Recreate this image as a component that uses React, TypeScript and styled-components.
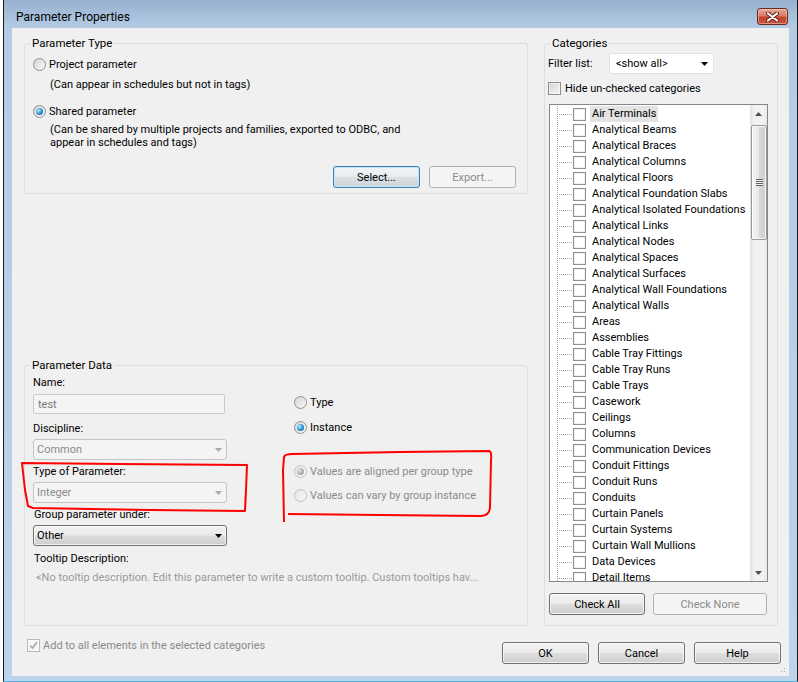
import styled, { createGlobalStyle, css } from 'styled-components';

const GlobalStyle = createGlobalStyle`
  * { box-sizing: border-box; }
  html, body { margin: 0; padding: 0; background: #ffffff; }
  body {
    font-family: Roboto, "Liberation Sans", Arial, sans-serif;
    font-size: 11px;
    color: #000;
  }
`;

const categories = [
  'Air Terminals',
  'Analytical Beams',
  'Analytical Braces',
  'Analytical Columns',
  'Analytical Floors',
  'Analytical Foundation Slabs',
  'Analytical Isolated Foundations',
  'Analytical Links',
  'Analytical Nodes',
  'Analytical Spaces',
  'Analytical Surfaces',
  'Analytical Wall Foundations',
  'Analytical Walls',
  'Areas',
  'Assemblies',
  'Cable Tray Fittings',
  'Cable Tray Runs',
  'Cable Trays',
  'Casework',
  'Ceilings',
  'Columns',
  'Communication Devices',
  'Conduit Fittings',
  'Conduit Runs',
  'Conduits',
  'Curtain Panels',
  'Curtain Systems',
  'Curtain Wall Mullions',
  'Data Devices',
  'Detail Items',
];

/* ---------- window chrome ---------- */

const Screen = styled.div`
  position: relative;
  width: 798px;
  height: 682px;
  padding-left: 3px;
  display: flex;
  background: #fff;
`;

const Window = styled.div`
  flex: 1;
  display: flex;
  flex-direction: column;
  border-left: 1px solid #1b1b1b;
  border-right: 1px solid #1b1b1b;
  border-bottom: 1px solid #4fb6e2;
  background: linear-gradient(180deg, #97b2cf 0px, #b4cbe5 28px, #bdd3eb 100%);
`;

const TitleBar = styled.div`
  height: 28px;
  flex: none;
  display: flex;
  align-items: flex-start;
  justify-content: space-between;
  padding: 0 9px 0 12px;
`;

const Title = styled.div`
  margin-top: 9px;
  font-size: 12px;
  line-height: 16px;
`;

const CloseButton = styled.div`
  margin-top: 8px;
  width: 31px;
  height: 17px;
  border: 1px solid #6b2a22;
  border-radius: 3px;
  background: linear-gradient(180deg, #e9a99a 0%, #d67a66 45%, #c5442c 55%, #c9563f 100%);
  box-shadow: inset 0 0 0 1px rgba(255, 220, 210, 0.45);
  display: flex;
  align-items: center;
  justify-content: center;
`;

const Client = styled.div`
  position: relative;
  flex: 1;
  margin: 0 8px 5px 8px;
  padding: 8px 11px 0 12px;
  background: #f0f0f0;
  display: flex;
  flex-direction: column;
`;

const Grip = styled.div`
  position: absolute;
  right: 2px;
  bottom: 2px;
  width: 10px;
  height: 10px;
  background-image: radial-gradient(circle, #a8a8a8 0.8px, transparent 1px);
  background-size: 3px 3px;
  clip-path: polygon(100% 0, 100% 100%, 0 100%);
`;

/* ---------- layout ---------- */

const MainRow = styled.div`
  display: flex;
  gap: 16px;
`;

const LeftColumn = styled.div`
  width: 504px;
  display: flex;
  flex-direction: column;
`;

const Group = styled.fieldset<{ $height: number; $width?: number; $top?: number }>`
  margin: ${p => p.$top ?? 0}px 0 0 0;
  padding: 0;
  min-width: 0;
  width: ${p => (p.$width ? `${p.$width}px` : 'auto')};
  height: ${p => p.$height}px;
  border: 1px solid #d5dfe5;
  border-radius: 3px;
`;

const Legend = styled.legend`
  margin-left: 5px;
  padding: 0 2px;
  font-size: 11.5px;
  line-height: 14px;
`;

const GroupBody = styled.div<{ $pad: string }>`
  padding: ${p => p.$pad};
  display: flex;
  flex-direction: column;
`;

const Row = styled.div<{ $top?: number; $indent?: number }>`
  display: flex;
  align-items: center;
  height: 16px;
  margin-top: ${p => p.$top ?? 0}px;
  margin-left: ${p => p.$indent ?? 0}px;
  gap: 3px;
  white-space: nowrap;
`;

const Note = styled.div<{ $top: number; $lh?: number }>`
  margin: ${p => p.$top}px 0 0 17px;
  line-height: ${p => p.$lh ?? 16}px;
`;

const Label = styled.div<{ $top: number; $indent?: number; $muted?: boolean }>`
  margin: ${p => p.$top}px 0 0 ${p => p.$indent ?? 0}px;
  line-height: 16px;
  white-space: nowrap;
  color: ${p => (p.$muted ? '#9a9a9a' : '#000')};
`;

const Text = styled.span<{ $disabled?: boolean }>`
  color: ${p => (p.$disabled ? '#8b8b8b' : '#000')};
`;

const ButtonRow = styled.div<{ $top: number; $gap: number; $justify?: string; $indent?: number; $right?: number }>`
  display: flex;
  justify-content: ${p => p.$justify ?? 'flex-start'};
  gap: ${p => p.$gap}px;
  margin: ${p => p.$top}px ${p => p.$right ?? 0}px 0 ${p => p.$indent ?? 0}px;
`;

const DataGrid = styled.div`
  display: grid;
  grid-template-columns: 194px 1fr;
  column-gap: 67px;
`;

const Stack = styled.div`
  display: flex;
  flex-direction: column;
`;

const Footer = styled.div`
  display: flex;
  justify-content: space-between;
  align-items: flex-start;
`;

/* ---------- controls ---------- */

const Button = styled.button<{ $width: number; $focused?: boolean }>`
  width: ${p => p.$width}px;
  height: 22px;
  padding: 0;
  font: inherit;
  color: #000;
  border: 1px solid #707070;
  border-radius: 3px;
  background: linear-gradient(180deg, #f2f2f2 0%, #ebebeb 48%, #dddddd 52%, #cfcfcf 100%);
  box-shadow: inset 0 0 0 1px rgba(255, 255, 255, 0.7);

  &:disabled {
    color: #8a8a8a;
    border-color: #adb2b5;
    background: #f4f4f4;
    box-shadow: none;
  }

  ${p =>
    p.$focused &&
    css`
      border-color: #3c7fb1;
      box-shadow: inset 0 0 0 1px #c5e4f7;
      background: linear-gradient(180deg, #f1f5f8 0%, #e6ecf0 48%, #d9dfe3 52%, #cfd5d9 100%);
    `}
`;

const RadioMark = styled.span<{ $checked?: boolean; $disabled?: boolean }>`
  flex: none;
  width: 13px;
  height: 13px;
  border-radius: 50%;
  border: 1px solid ${p => (p.$disabled ? '#c2c2c2' : '#8e8f8f')};
  background: ${p =>
    p.$disabled
      ? 'linear-gradient(135deg, #e6e6e6, #f7f7f7)'
      : 'linear-gradient(135deg, #d4d4d4, #f9f9f9)'};
  display: flex;
  align-items: center;
  justify-content: center;

  &::after {
    content: '';
    display: ${p => (p.$checked ? 'block' : 'none')};
    width: 7px;
    height: 7px;
    border-radius: 50%;
    background: ${p =>
      p.$disabled
        ? 'radial-gradient(circle at 35% 35%, #e4e4e4, #a2a2a2 70%, #8d8d8d)'
        : 'radial-gradient(circle at 35% 35%, #b5ecff, #2b8fd6 55%, #0c4c86)'};
  }
`;

const CheckMark = styled.span<{ $disabled?: boolean; $soft?: boolean }>`
  flex: none;
  width: 13px;
  height: 13px;
  border: 1px solid ${p => (p.$disabled ? '#b9b9b9' : '#8e8f8f')};
  background: ${p =>
    p.$soft
      ? '#fff'
      : p.$disabled
      ? '#f4f4f4'
      : 'linear-gradient(135deg, #d3d3d3, #f8f8f8)'};
  box-shadow: inset 0 0 0 1px ${p => (p.$soft ? '#f0f0f0' : 'rgba(255,255,255,0.5)')};
  display: flex;
  align-items: center;
  justify-content: center;
`;

const Combo = styled.div<{ $variant: 'white' | 'disabled' | 'button'; $width: number; $top?: number }>`
  width: ${p => p.$width}px;
  height: 21px;
  margin-top: ${p => p.$top ?? 0}px;
  display: flex;
  align-items: center;
  justify-content: space-between;
  border-radius: 3px;
  white-space: nowrap;

  ${p =>
    p.$variant === 'white' &&
    css`
      padding: 0 5px 0 6px;
      background: #fff;
      border: 1px solid #e2e3ea;
      border-radius: 2px;
    `}
  ${p =>
    p.$variant === 'disabled' &&
    css`
      padding: 0 4px 0 3px;
      color: #8b8b8b;
      background: #f4f4f4;
      border: 1px solid #c3c6c8;
    `}
  ${p =>
    p.$variant === 'button' &&
    css`
      padding: 0 4px 0 3px;
      border: 1px solid #707070;
      background: linear-gradient(180deg, #f2f2f2 0%, #ebebeb 48%, #dddddd 52%, #cfcfcf 100%);
      box-shadow: inset 0 0 0 1px rgba(255, 255, 255, 0.7);
    `}
`;

const TextBox = styled.div`
  width: 192px;
  height: 20px;
  margin-top: 3px;
  padding: 0 4px;
  display: flex;
  align-items: center;
  color: #7a7a7a;
  background: #f4f4f4;
  border: 1px solid #c9c9c9;
  border-radius: 2px;
`;

/* ---------- category tree ---------- */

const FilterLabel = styled.div`
  width: 61px;
  margin-left: 3px;
`;

const FilterRow = styled.div`
  display: flex;
  align-items: center;
  margin-top: 3px;
`;

const TreeBox = styled.div`
  margin: 8px 0 0 4px;
  width: 219px;
  height: 478px;
  border: 1px solid #828790;
  background: #fff;
  display: flex;
  overflow: hidden;
`;

const TreeItems = styled.div`
  flex: 1;
  padding-top: 1px;
  overflow: hidden;
`;

const TreeRow = styled.div`
  height: 16px;
  padding-left: 7px;
  display: flex;
  align-items: center;
  white-space: nowrap;
`;

const Connector = styled.span`
  flex: none;
  width: 16px;
  height: 16px;
  background:
    repeating-linear-gradient(to bottom, #a0a0a0 0 1px, transparent 1px 2px) 0 0 / 1px 100% no-repeat,
    repeating-linear-gradient(to right, #a0a0a0 0 1px, transparent 1px 2px) 0 8px / 100% 1px no-repeat;
`;

const ItemText = styled.span<{ $selected?: boolean }>`
  margin-left: 4px;
  padding: 0 2px;
  line-height: 16px;
  background: ${p => (p.$selected ? '#e3e3e3' : 'transparent')};
`;

const ScrollBar = styled.div`
  flex: none;
  width: 17px;
  display: flex;
  flex-direction: column;
  background: linear-gradient(90deg, #e2e2e2 0%, #f1f1f1 25%, #f3f3f3 75%, #e8e8e8 100%);
`;

const ScrollArrow = styled.div`
  height: 17px;
  flex: none;
  display: flex;
  align-items: center;
  justify-content: center;
`;

const ScrollTrack = styled.div`
  flex: 1;
  padding: 3px 0 0 1px;
`;

const Thumb = styled.div`
  height: 115px;
  border: 1px solid #989898;
  border-radius: 2px;
  background: linear-gradient(90deg, #f3f3f3 0%, #e8e8e8 50%, #d8d8d8 51%, #cfcfcf 100%);
  box-shadow: inset 0 0 0 1px rgba(255, 255, 255, 0.8);
  display: flex;
  align-items: center;
  justify-content: center;
`;

const ThumbGrip = styled.div`
  width: 7px;
  height: 7px;
  background: repeating-linear-gradient(to bottom, #5f5f5f 0 1px, #f4f4f4 1px 2px);
`;

/* ---------- drawings ---------- */

const Overlay = styled.svg`
  position: absolute;
  left: 0;
  top: 0;
  pointer-events: none;
`;

function DownArrow({ color = '#000' }: { color?: string }) {
  return (
    <svg width="7" height="4" viewBox="0 0 7 4">
      <path d="M0 0H7L3.5 4Z" fill={color} />
    </svg>
  );
}

function UpArrow({ color = '#505050' }: { color?: string }) {
  return (
    <svg width="7" height="4" viewBox="0 0 7 4">
      <path d="M0 4H7L3.5 0Z" fill={color} />
    </svg>
  );
}

function CloseGlyph() {
  return (
    <svg width="13" height="10" viewBox="0 0 13 10">
      <path d="M2 1.5L11 8.5M11 1.5L2 8.5" stroke="#5b2016" strokeWidth="4" strokeLinecap="round" />
      <path d="M2 1.5L11 8.5M11 1.5L2 8.5" stroke="#ffffff" strokeWidth="2.2" strokeLinecap="round" />
    </svg>
  );
}

function Tick() {
  return (
    <svg width="9" height="9" viewBox="0 0 9 9">
      <path d="M1 4.5L3.5 7L8 1" fill="none" stroke="#a7a7a7" strokeWidth="1.6" />
    </svg>
  );
}

function Radio({ label, checked, disabled, top }: { label: string; checked?: boolean; disabled?: boolean; top: number }) {
  return (
    <Row $top={top}>
      <RadioMark $checked={checked} $disabled={disabled} />
      <Text $disabled={disabled}>{label}</Text>
    </Row>
  );
}

export default function App() {
  return (
    <>
      <GlobalStyle />
      <Screen>
        <Window>
          <TitleBar>
            <Title>Parameter Properties</Title>
            <CloseButton>
              <CloseGlyph />
            </CloseButton>
          </TitleBar>

          <Client>
            <MainRow>
              <LeftColumn>
                <Group $height={158}>
                  <Legend>Parameter Type</Legend>
                  <GroupBody $pad="6px 11px 0 8px">
                    <Radio label="Project parameter" top={0} />
                    <Note $top={5}>(Can appear in schedules but not in tags)</Note>
                    <Radio label="Shared parameter" checked top={10} />
                    <Note $top={4} $lh={13}>
                      (Can be shared by multiple projects and families, exported to ODBC, and
                      <br />
                      appear in schedules and tags)
                    </Note>
                    <ButtonRow $top={17} $gap={9} $justify="flex-end">
                      <Button $width={87} $focused>
                        Select...
                      </Button>
                      <Button $width={87} disabled>
                        Export...
                      </Button>
                    </ButtonRow>
                  </GroupBody>
                </Group>

                <Group $height={268} $top={164}>
                  <Legend>Parameter Data</Legend>
                  <GroupBody $pad="0 8px 0 8px">
                    <DataGrid>
                      <Stack>
                        <Label $top={3}>Name:</Label>
                        <TextBox>test</TextBox>
                        <Label $top={7}>Discipline:</Label>
                        <Combo $variant="disabled" $width={194} $top={2}>
                          Common
                          <DownArrow color="#a9a9a9" />
                        </Combo>
                        <Label $top={4}>Type of Parameter:</Label>
                        <Combo $variant="disabled" $width={194} $top={2}>
                          Integer
                          <DownArrow color="#a9a9a9" />
                        </Combo>
                      </Stack>
                      <Stack>
                        <Radio label="Type" top={22} />
                        <Radio label="Instance" checked top={9} />
                        <Radio label="Values are aligned per group type" checked disabled top={28} />
                        <Radio label="Values can vary by group instance" disabled top={8} />
                      </Stack>
                    </DataGrid>
                    <Label $top={4} $indent={1}>Group parameter under:</Label>
                    <Combo $variant="button" $width={194} $top={2}>
                      Other
                      <DownArrow />
                    </Combo>
                    <Label $top={5} $indent={1}>Tooltip Description:</Label>
                    <Label $top={3} $indent={3} $muted>
                      &lt;No tooltip description. Edit this parameter to write a custom tooltip. Custom tooltips hav...
                    </Label>
                  </GroupBody>
                </Group>
              </LeftColumn>

              <Group $height={590} $width={234}>
                <Legend>Categories</Legend>
                <GroupBody $pad="0">
                  <FilterRow>
                    <FilterLabel>Filter list:</FilterLabel>
                    <Combo $variant="white" $width={105}>
                      &lt;show all&gt;
                      <DownArrow />
                    </Combo>
                  </FilterRow>
                  <Row $top={6} $indent={3}>
                    <CheckMark />
                    <span style={{ marginLeft: 1 }}>Hide un-checked categories</span>
                  </Row>
                  <TreeBox>
                    <TreeItems>
                      {categories.map((name, i) => (
                        <TreeRow key={name}>
                          <Connector />
                          <CheckMark $soft />
                          <ItemText $selected={i === 0}>{name}</ItemText>
                        </TreeRow>
                      ))}
                    </TreeItems>
                    <ScrollBar>
                      <ScrollArrow>
                        <UpArrow />
                      </ScrollArrow>
                      <ScrollTrack>
                        <Thumb>
                          <ThumbGrip />
                        </Thumb>
                      </ScrollTrack>
                      <ScrollArrow>
                        <DownArrow color="#505050" />
                      </ScrollArrow>
                    </ScrollBar>
                  </TreeBox>
                  <ButtonRow $top={11} $gap={8} $indent={4}>
                    <Button $width={96}>Check All</Button>
                    <Button $width={114} disabled>
                      Check None
                    </Button>
                  </ButtonRow>
                </GroupBody>
              </Group>
            </MainRow>

            <Footer>
              <Row $top={11} $indent={3}>
                <CheckMark $disabled>
                  <Tick />
                </CheckMark>
                <Text $disabled>Add to all elements in the selected categories</Text>
              </Row>
              <ButtonRow $top={16} $gap={9} $right={-3}>
                <Button $width={87}>OK</Button>
                <Button $width={87}>Cancel</Button>
                <Button $width={87}>Help</Button>
              </ButtonRow>
            </Footer>
            <Grip />
          </Client>
        </Window>

        <Overlay width="798" height="682" viewBox="0 0 798 682">
          <path
            d="M22 463 L120 464 L247 465 L246 490 L245 511 L150 510 L33 508 L28 506 L25 490 Z"
            fill="none"
            stroke="#ff0000"
            strokeWidth="2"
            strokeLinejoin="round"
          />
          <path
            d="M284 522 L283 470 L284 457 Q285 454 292 454 L400 452 L489 451 Q492 452 491 460 L490 508 Q489 516 481 516 L380 515 L288 514"
            fill="none"
            stroke="#ff0000"
            strokeWidth="2"
            strokeLinejoin="round"
          />
        </Overlay>
      </Screen>
    </>
  );
}
